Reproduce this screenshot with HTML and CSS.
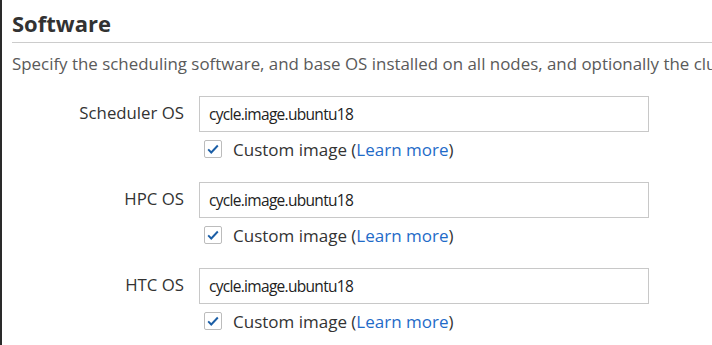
FILE: index.html
```html
<!DOCTYPE html>
<html lang="en">

<head>
	<meta charset="utf-8" />
	<meta name="viewport" content="width=device-width, initial-scale=1" />
	<title>Software</title>
	<link rel="stylesheet" href="styles.css">
</head>

<body>
	<div class="panel">
		<h2 class="section-title">Software</h2>
		<p class="section-desc">Specify the scheduling software, and base OS installed on all nodes, and optionally the cluster-init projects.</p>

		<div class="field">
			<label class="field-label">Scheduler OS</label>
			<div class="field-body">
				<input type="text" class="text-input" value="cycle.image.ubuntu18">
				<div class="check-row">
					<span class="checkbox"><svg viewBox="0 0 16 16" width="14" height="14"><path d="M2.5 8.5 L6 12 L13.5 4" fill="none" stroke="#1b5ea6" stroke-width="2.2"/></svg></span>
					<span>Custom image (<a href="#">Learn more</a>)</span>
				</div>
			</div>
		</div>

		<div class="field">
			<label class="field-label">HPC OS</label>
			<div class="field-body">
				<input type="text" class="text-input" value="cycle.image.ubuntu18">
				<div class="check-row">
					<span class="checkbox"><svg viewBox="0 0 16 16" width="14" height="14"><path d="M2.5 8.5 L6 12 L13.5 4" fill="none" stroke="#1b5ea6" stroke-width="2.2"/></svg></span>
					<span>Custom image (<a href="#">Learn more</a>)</span>
				</div>
			</div>
		</div>

		<div class="field">
			<label class="field-label">HTC OS</label>
			<div class="field-body">
				<input type="text" class="text-input" value="cycle.image.ubuntu18">
				<div class="check-row">
					<span class="checkbox"><svg viewBox="0 0 16 16" width="14" height="14"><path d="M2.5 8.5 L6 12 L13.5 4" fill="none" stroke="#1b5ea6" stroke-width="2.2"/></svg></span>
					<span>Custom image (<a href="#">Learn more</a>)</span>
				</div>
			</div>
		</div>
	</div>
</body>

</html>
```

FILE: styles.css
```css
body {
	margin: 0;
	background-color: #ffffff;
	font-family: "Open Sans", "Noto Sans", Arial, sans-serif;
	color: #333333;
	overflow: hidden;
}
.panel {
	border-left: 2px solid #2a2a2a;
	padding: 10px 0 0 10px;
	height: 335px;
	white-space: nowrap;
	overflow: hidden;
}
.section-title {
	margin: 0;
	font-size: 22px;
	font-weight: 700;
	line-height: 26px;
	color: #323232;
	padding-bottom: 6px;
	border-bottom: 1px solid #cccccc;
}
.section-desc {
	margin: 9px 0 20px 0;
	font-size: 16.9px;
	line-height: 24px;
	color: #5a5a5a;
}
.field {
	display: flex;
	align-items: flex-start;
	margin-bottom: 22px;
}
.field-label {
	width: 172px;
	text-align: right;
	font-size: 16.8px;
	line-height: 34px;
	color: #333333;
	padding-right: 15px;
}
.field-body {
	display: flex;
	flex-direction: column;
}
.text-input {
	width: 450px;
	height: 36px;
	box-sizing: border-box;
	border: 1px solid #c8c8c8;
	padding: 0 9px;
	font-family: inherit;
	font-size: 15.5px;
	letter-spacing: -0.7px;
	color: #222222;
	outline: none;
}
.check-row {
	display: flex;
	align-items: center;
	height: 22px;
	margin-top: 6px;
	padding-left: 5px;
	font-size: 17px;
	color: #333333;
}
.checkbox {
	width: 18px;
	height: 18px;
	box-sizing: border-box;
	border: 1px solid #bcbcbc;
	border-radius: 2px;
	display: flex;
	align-items: center;
	justify-content: center;
	margin-right: 11px;
}
.check-row a {
	color: #1f6bc8;
	text-decoration: none;
}
```
